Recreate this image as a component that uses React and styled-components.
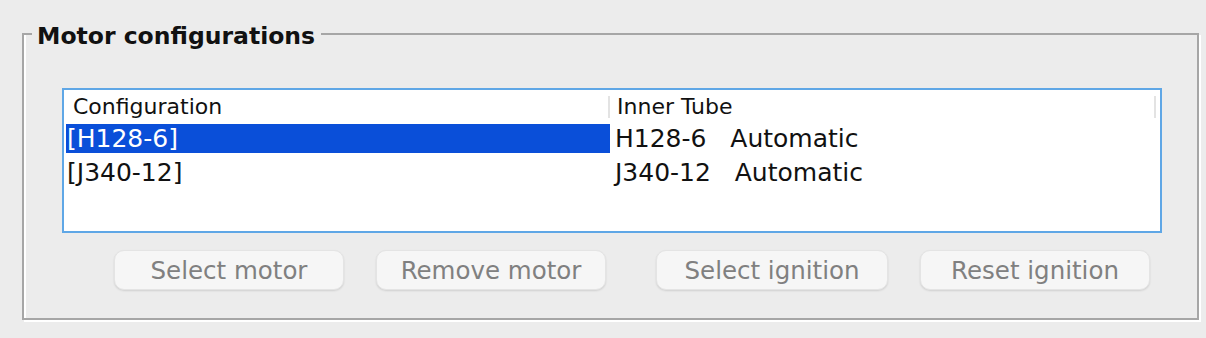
import styled, { createGlobalStyle } from "styled-components";

const GlobalStyle = createGlobalStyle`
  html, body {
    margin: 0;
    padding: 0;
    background: #ececec;
    font-family: "DejaVu Sans", "Liberation Sans", sans-serif;
  }
`;

const Page = styled.div`
  width: 1206px;
  height: 338px;
  overflow: hidden;
  padding-top: 18px;
  box-sizing: border-box;
`;

const Group = styled.fieldset`
  margin: 0 7px 0 22px;
  padding: 38px 35px 28px 38px;
  border: 2px solid #a6a6a6;
  box-shadow: 2px 2px 0 #ffffff, inset 2px 0 0 #ffffff;
  min-width: 0;
`;

const Legend = styled.legend`
  padding: 5px 6px 0 5px;
  margin-left: -30px;
  font-size: 23.5px;
  line-height: 27px;
  font-weight: bold;
  color: #111;
`;

const Table = styled.div`
  width: 1100px;
  height: 145px;
  box-sizing: border-box;
  border: 2px solid #5fa7e6;
  background: #ffffff;
`;

const HeaderRow = styled.div`
  display: grid;
  grid-template-columns: 546px 546px;
  height: 30px;
`;

const HeaderCell = styled.div`
  margin-top: 6px;
  height: 22px;
  line-height: 22px;
  font-size: 22px;
  color: #111;
  padding-left: ${(p) => p.$pad}px;
  border-right: 2px solid #e3e3e3;
  white-space: nowrap;
`;

const Row = styled.div`
  display: grid;
  grid-template-columns: 544px 1fr;
  padding-left: 2px;
  height: 34px;
`;

const Cell = styled.div`
  margin-top: 4px;
  height: 29px;
  line-height: 29px;
  font-size: 25px;
  padding-left: ${(p) => p.$pad}px;
  white-space: pre;
  background: ${(p) => (p.$selected ? "#0a4fd9" : "transparent")};
  color: ${(p) => (p.$selected ? "#ffffff" : "#111")};
`;

const ButtonBar = styled.div`
  display: flex;
  gap: 50px;
  margin-top: 17px;
  padding-left: 52px;
`;

const ButtonPair = styled.div`
  display: flex;
  gap: 32px;
`;

const Button = styled.button`
  width: ${(p) => p.$w || 230}px;
  height: 40px;
  border-radius: 10px;
  border: 1px solid #e4e4e4;
  background: #f6f6f6;
  box-shadow: 0 1px 2px rgba(0, 0, 0, 0.12);
  color: #808080;
  font-family: "DejaVu Sans", "Liberation Sans", sans-serif;
  font-size: 24.5px;
  padding: 0;
`;

const rows = [
  { config: "[H128-6]", tube: "H128-6   Automatic", selected: true },
  { config: "[J340-12]", tube: "J340-12   Automatic", selected: false },
];

const App = () => {
  return (
    <Page>
      <GlobalStyle />
      <Group>
        <Legend>Motor configurations</Legend>
        <Table>
          <HeaderRow>
            <HeaderCell $pad={9}>Configuration</HeaderCell>
            <HeaderCell $pad={7}>Inner Tube</HeaderCell>
          </HeaderRow>
          {rows.map((row) => (
            <Row key={row.config}>
              <Cell $pad={1} $selected={row.selected}>
                {row.config}
              </Cell>
              <Cell $pad={5}>{row.tube}</Cell>
            </Row>
          ))}
        </Table>
        <ButtonBar>
          <ButtonPair>
            <Button>Select motor</Button>
            <Button>Remove motor</Button>
          </ButtonPair>
          <ButtonPair>
            <Button $w={232}>Select ignition</Button>
            <Button>Reset ignition</Button>
          </ButtonPair>
        </ButtonBar>
      </Group>
    </Page>
  );
};

export default App;
